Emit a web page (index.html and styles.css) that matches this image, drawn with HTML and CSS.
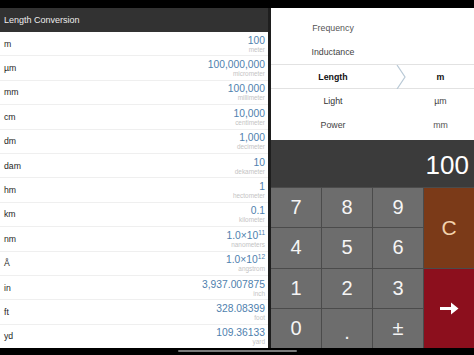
FILE: index.html
```html
<!DOCTYPE html>
<html>
<head>
<meta charset="utf-8">
<link rel="stylesheet" href="styles.css">
</head>
<body>
<div class="screen">
  <div class="status"></div>
  <div class="main">
    <section class="list">
      <header class="list-head">Length Conversion</header>
      <div class="rows">
        <div class="row"><span class="unit">m</span><span class="val"><span class="num">100</span><span class="name">meter</span></span></div>
        <div class="row"><span class="unit">µm</span><span class="val"><span class="num">100,000,000</span><span class="name">micrometer</span></span></div>
        <div class="row"><span class="unit">mm</span><span class="val"><span class="num">100,000</span><span class="name">millimeter</span></span></div>
        <div class="row"><span class="unit">cm</span><span class="val"><span class="num">10,000</span><span class="name">centimeter</span></span></div>
        <div class="row"><span class="unit">dm</span><span class="val"><span class="num">1,000</span><span class="name">decimeter</span></span></div>
        <div class="row"><span class="unit">dam</span><span class="val"><span class="num">10</span><span class="name">dekameter</span></span></div>
        <div class="row"><span class="unit">hm</span><span class="val"><span class="num">1</span><span class="name">hectometer</span></span></div>
        <div class="row"><span class="unit">km</span><span class="val"><span class="num">0.1</span><span class="name">kilometer</span></span></div>
        <div class="row"><span class="unit">nm</span><span class="val"><span class="num">1.0×10<sup>11</sup></span><span class="name">nanometers</span></span></div>
        <div class="row"><span class="unit">Å</span><span class="val"><span class="num">1.0×10<sup>12</sup></span><span class="name">angstrom</span></span></div>
        <div class="row"><span class="unit">in</span><span class="val"><span class="num">3,937.007875</span><span class="name">inch</span></span></div>
        <div class="row"><span class="unit">ft</span><span class="val"><span class="num">328.08399</span><span class="name">foot</span></span></div>
        <div class="row"><span class="unit">yd</span><span class="val"><span class="num">109.36133</span><span class="name">yard</span></span></div>
      </div>
    </section>
    <section class="calc">
      <div class="picker">
        <div class="prow"><span class="pl far">Frequency</span><span class="pm"></span><span class="pr"></span></div>
        <div class="prow"><span class="pl">Inductance</span><span class="pm"></span><span class="pr"></span></div>
        <div class="prow sel"><span class="pl">Length</span><span class="pm"><svg class="chev" width="10" height="24" viewBox="0 0 10 24"><polyline points="1,0 9,12 1,24" fill="none" stroke="#b9c9d6" stroke-width="1.2"/></svg></span><span class="pr">m</span></div>
        <div class="prow"><span class="pl near">Light</span><span class="pm"></span><span class="pr">µm</span></div>
        <div class="prow"><span class="pl">Power</span><span class="pm"></span><span class="pr far">mm</span></div>
      </div>
      <div class="display">100</div>
      <div class="keypad">
        <div class="key">7</div>
        <div class="key">8</div>
        <div class="key">9</div>
        <div class="key clear">C</div>
        <div class="key">4</div>
        <div class="key">5</div>
        <div class="key">6</div>
        <div class="key">1</div>
        <div class="key">2</div>
        <div class="key">3</div>
        <div class="key go"><svg width="19" height="13" viewBox="0 0 19 13"><path d="M0 5 H11 V0.5 L18.5 6.5 L11 12.5 V8 H0 Z" fill="#fff"/></svg></div>
        <div class="key">0</div>
        <div class="key dot">.</div>
        <div class="key">±</div>
      </div>
    </section>
  </div>
  <div class="home"><span class="indicator"></span></div>
</div>
</body>
</html>
```
FILE: styles.css
```css
* { box-sizing: border-box; }
html, body { margin: 0; padding: 0; background: #000; }
body { font-family: "Liberation Sans", Arial, Helvetica, sans-serif; }
.screen { width: 474px; height: 355px; display: flex; flex-direction: column; overflow: hidden; background: #000; }
.status { height: 8px; flex: none; }
.main { height: 340px; flex: none; display: flex; gap: 3px; background: #1e1e1e; }
.home { flex: 1; display: flex; justify-content: center; padding-top: 2px; }
.indicator { width: 119px; height: 2px; background: #7a7a7a; border-radius: 1px; }

.list { width: 268px; flex: none; display: flex; flex-direction: column; background: #fff; }
.list-head { height: 24px; flex: none; background: #323232; color: #ededed; font-size: 9px; display: flex; align-items: center; padding-left: 4px; }
.rows { flex: 1; display: flex; flex-direction: column; }
.row { flex: 1; display: flex; justify-content: space-between; align-items: center; border-bottom: 1px solid #efefef; padding: 0 3px 0 4px; }
.row:last-child { border-bottom: none; }
.unit { font-size: 8.7px; color: #1e1e1e; }
.val { display: flex; flex-direction: column; align-items: flex-end; padding-top: 1px; }
.num { font-size: 10.3px; line-height: 11px; color: #4f7fae; }
.num sup { font-size: 6.5px; line-height: 0; vertical-align: 4px; }
.name { font-size: 6.4px; line-height: 8px; color: #c4c4c4; }

.calc { flex: 1; display: flex; flex-direction: column; }
.picker { height: 132px; flex: none; background: #fff; padding-top: 8px; display: flex; flex-direction: column; }
.prow { height: 24.2px; display: grid; grid-template-columns: 124px 12px 1fr; align-items: center; font-size: 8.8px; color: #444; }
.prow.sel { border-top: 1px solid #e2e2e2; border-bottom: 1px solid #e2e2e2; font-weight: bold; color: #111; }
.pl, .pr { text-align: center; }
.pl.far, .pr.far { color: #555; }
.pl.near { color: #333; }
.pm { display: flex; align-items: center; justify-content: center; height: 100%; }
.chev { display: block; }

.display { height: 47px; flex: none; background: #3b3b3b; color: #fff; font-size: 26px; display: flex; align-items: center; justify-content: flex-end; padding: 3px 5px 0 0; }

.keypad { flex: 1; display: grid; grid-template-columns: repeat(4, 1fr); grid-template-rows: repeat(4, 1fr); gap: 1px; padding-top: 1px; background: #4b4b4b; }
.key { background: #6d6d6d; color: #f5f5f5; font-size: 20px; display: flex; align-items: center; justify-content: center; }
.key.clear { grid-column: 4; grid-row: 1 / span 2; background: #7b3a18; color: #f3d2ad; font-size: 21px; }
.key.go { grid-column: 4; grid-row: 3 / span 2; background: #8c0f1d; }
.key.dot { padding-top: 8px; }
```
